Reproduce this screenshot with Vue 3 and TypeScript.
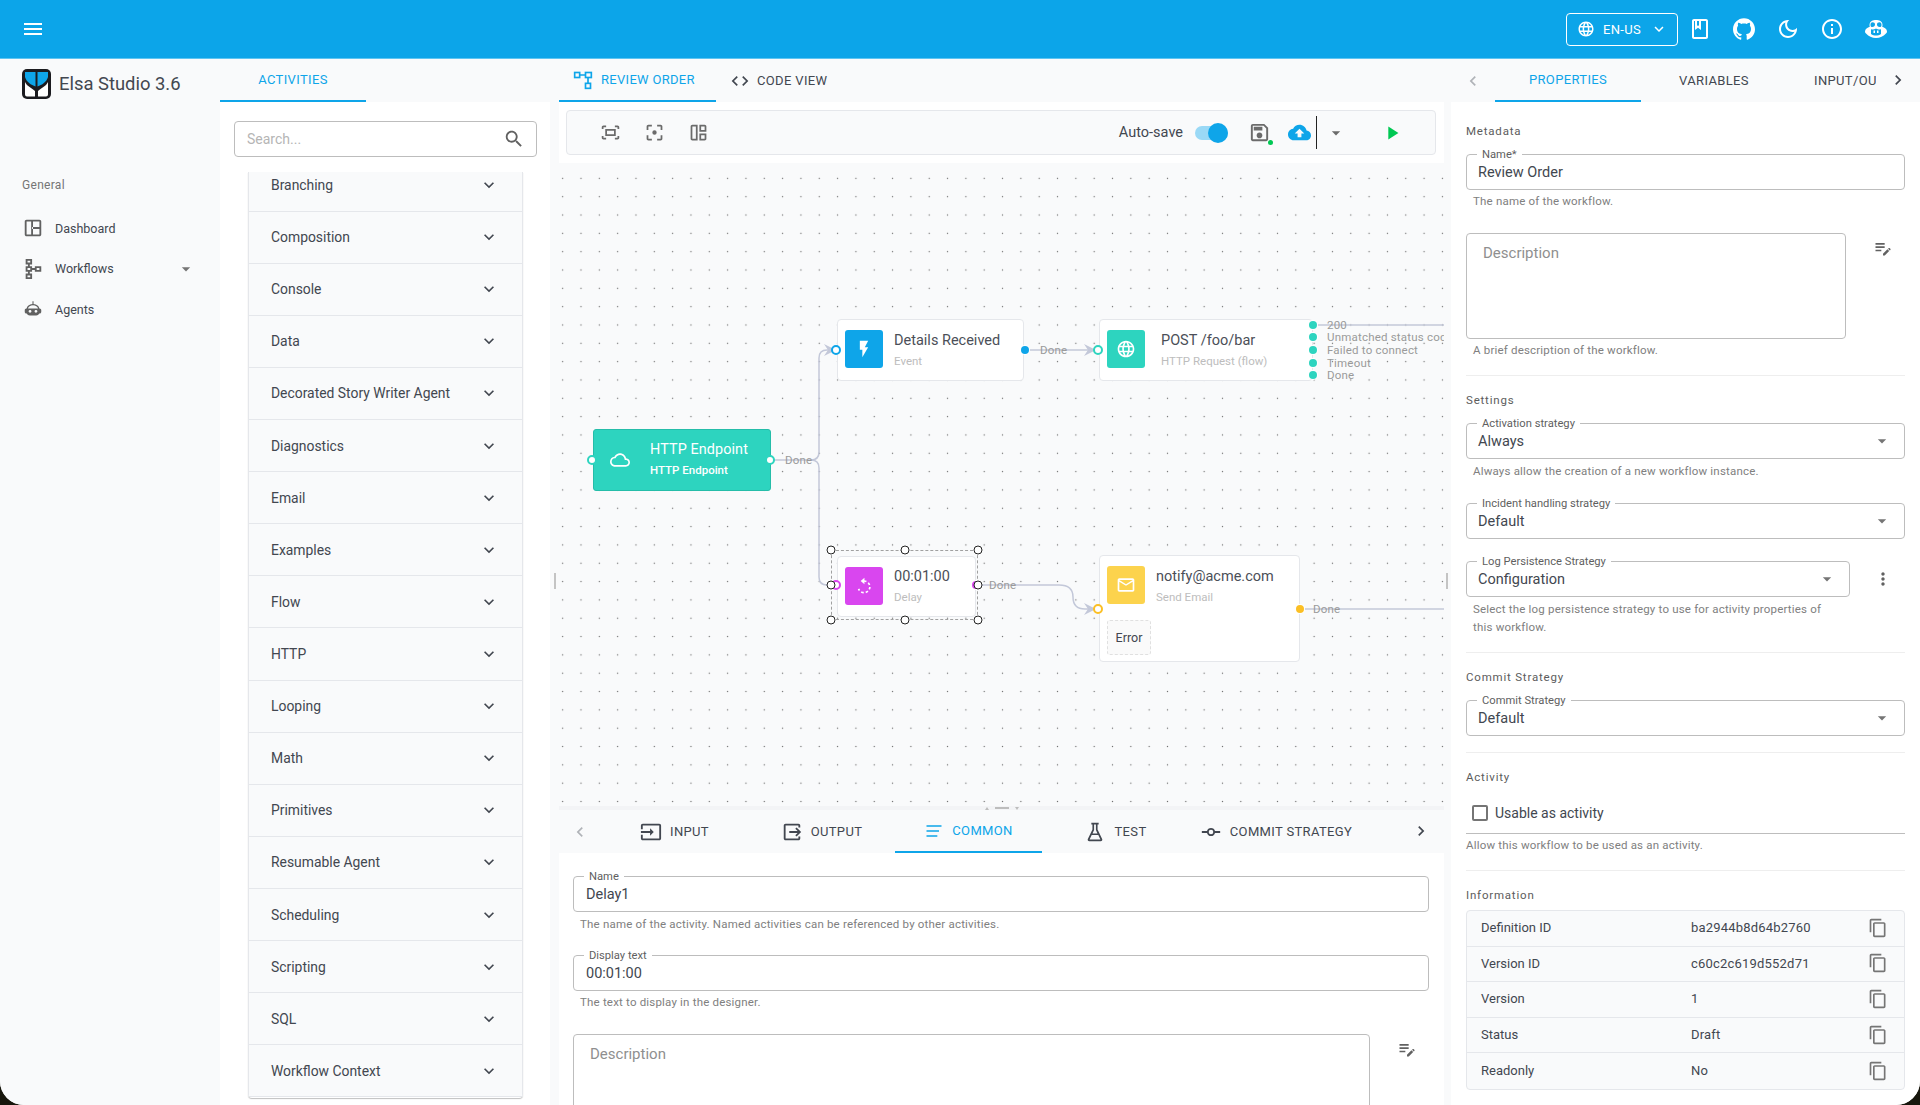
<script setup lang="ts">
// Material icon paths used across the page
const icons: Record<string, string> = {
  menu: 'M3 18h18v-2H3v2zm0-5h18v-2H3v2zm0-7v2h18V6H3z',
  globe: 'M11.99 2C6.47 2 2 6.48 2 12s4.47 10 9.99 10C17.52 22 22 17.52 22 12S17.52 2 11.99 2zm6.93 6h-2.95c-.32-1.25-.78-2.45-1.38-3.56 1.84.63 3.37 1.91 4.33 3.56zM12 4.04c.83 1.2 1.48 2.53 1.91 3.96h-3.82c.43-1.43 1.08-2.76 1.91-3.96zM4.26 14C4.1 13.36 4 12.69 4 12s.1-1.36.26-2h3.38c-.08.66-.14 1.32-.14 2 0 .68.06 1.34.14 2H4.26zm.82 2h2.95c.32 1.25.78 2.45 1.38 3.56-1.84-.63-3.37-1.9-4.33-3.56zm2.95-8H5.08c.96-1.66 2.49-2.93 4.33-3.56C8.81 5.55 8.35 6.75 8.03 8zM12 19.96c-.83-1.2-1.48-2.53-1.91-3.96h3.82c-.43 1.43-1.08 2.76-1.91 3.96zM14.34 14H9.66c-.09-.66-.16-1.32-.16-2 0-.68.07-1.35.16-2h4.68c.09.65.16 1.32.16 2 0 .68-.07 1.34-.16 2zm.25 5.56c.6-1.11 1.06-2.31 1.38-3.56h2.95c-.96 1.65-2.49 2.93-4.33 3.56zM16.36 14c.08-.66.14-1.32.14-2 0-.68-.06-1.34-.14-2h3.38c.16.64.26 1.31.26 2s-.1 1.36-.26 2h-3.38z',
  expand: 'M16.59 8.59L12 13.17 7.41 8.59 6 10l6 6 6-6z',
  book: 'M18 2H6c-1.1 0-2 .9-2 2v16c0 1.1.9 2 2 2h12c1.1 0 2-.9 2-2V4c0-1.1-.9-2-2-2zM9 4h2v5l-1-.75L9 9V4zm9 16H6V4h1v9l3-2.25L13 13V4h5v16z',
  github: 'M12 .297c-6.63 0-12 5.373-12 12 0 5.303 3.438 9.8 8.205 11.385.6.113.82-.258.82-.577 0-.285-.01-1.04-.015-2.04-3.338.724-4.042-1.61-4.042-1.61C4.422 18.07 3.633 17.7 3.633 17.7c-1.087-.744.084-.729.084-.729 1.205.084 1.838 1.236 1.838 1.236 1.07 1.835 2.809 1.305 3.495.998.108-.776.417-1.305.76-1.605-2.665-.3-5.466-1.332-5.466-5.93 0-1.31.465-2.38 1.235-3.22-.135-.303-.54-1.523.105-3.176 0 0 1.005-.322 3.3 1.23.96-.267 1.98-.399 3-.405 1.02.006 2.04.138 3 .405 2.28-1.552 3.285-1.23 3.285-1.23.645 1.653.24 2.873.12 3.176.765.84 1.23 1.91 1.23 3.22 0 4.61-2.805 5.625-5.475 5.92.42.36.81 1.096.81 2.22 0 1.606-.015 2.896-.015 3.286 0 .315.21.69.825.57C20.565 22.092 24 17.592 24 12.297c0-6.627-5.373-12-12-12',
  moon: 'M9.37 5.51c-.18.64-.27 1.31-.27 1.99 0 4.08 3.32 7.4 7.4 7.4.68 0 1.35-.09 1.99-.27C17.45 17.19 14.93 19 12 19c-3.86 0-7-3.14-7-7 0-2.93 1.81-5.45 4.37-6.49zM12 3c-4.97 0-9 4.03-9 9s4.03 9 9 9 9-4.03 9-9c0-.46-.04-.92-.1-1.36-.98 1.37-2.58 2.26-4.4 2.26-2.98 0-5.4-2.42-5.4-5.4 0-1.81.89-3.42 2.26-4.4-.44-.06-.9-.1-1.36-.1z',
  info: 'M11 7h2v2h-2zm0 4h2v6h-2zm1-9C6.48 2 2 6.48 2 12s4.48 10 10 10 10-4.48 10-10S17.52 2 12 2zm0 18c-4.41 0-8-3.59-8-8s3.59-8 8-8 8 3.59 8 8-3.59 8-8 8z',
  copilot: 'M12 3C9 3 5.5 4 5.5 8c0 .7.1 1.3.3 1.8C3.5 10.5 1 12.2 1 14.5c0 1 .5 1.8 1.3 2.3C4.5 19.5 8 21 12 21s7.5-1.5 9.7-4.2c.8-.5 1.3-1.3 1.3-2.3 0-2.3-2.5-4-4.8-4.7.2-.5.3-1.1.3-1.8C18.5 4 15 3 12 3zM8.5 5.2c1.5 0 2.5.8 2.5 2.4 0 1.5-1 2.5-2.7 2.5-1.3 0-1.8-1-1.8-2.4 0-1.5.6-2.5 2-2.5zm7 0c1.4 0 2 1 2 2.5 0 1.4-.5 2.4-1.8 2.4-1.7 0-2.7-1-2.7-2.5 0-1.6 1-2.4 2.5-2.4zM12 11.5c2.5 1.5 5 .8 5 .8V17c-1.5 1-3.2 1.5-5 1.5S8.5 18 7 17v-4.7s2.5.7 5-.8zM9.5 13.5V16H11v-2.5H9.5zm3.5 0V16h1.5v-2.5H13z',
  schema: 'M14 9v2h-3V9H8.5V7H11V1H4v6h2.5v2H4v6h2.5v2H4v6h7v-6H8.5v-2H11v-2h3v2h7V9h-7zM6 3h3v2H6V3zm3 18H6v-2h3v2zm0-8H6v-2h3v2zm10 0h-3v-2h3v2z',
  dashboard: 'M19 5v14H5V5h14m0-2H5c-1.1 0-2 .9-2 2v14c0 1.1.9 2 2 2h14c1.1 0 2-.9 2-2V5c0-1.1-.9-2-2-2zM10 5h2v14h-2zM11 11h8v2h-8z',
  robot: 'M11.4 3.5h1.2v3.1c3.6.2 5.9 2.2 6.4 4.9h.3c.9 0 1.7.8 1.7 1.7v2.1c0 .9-.8 1.7-1.7 1.7h-.5c-.6 1.3-1.9 2.1-3.3 2.1H8.5c-1.4 0-2.7-.8-3.3-2.1h-.5c-.9 0-1.7-.8-1.7-1.7v-2.1c0-.9.8-1.7 1.7-1.7H5c.5-2.7 2.8-4.7 6.4-4.9V3.5zM6.5 11.5h11c-.4-2.1-2.6-3.7-5.5-3.7s-5.1 1.6-5.5 3.7zM8.8 13c-.9 0-1.6.7-1.6 1.5s.7 1.5 1.6 1.5 1.5-.7 1.5-1.5S9.7 13 8.8 13zm6.4 0c-.9 0-1.5.7-1.5 1.5s.6 1.5 1.5 1.5 1.6-.7 1.6-1.5-.7-1.5-1.6-1.5z',
  search: 'M15.5 14h-.79l-.28-.27C15.41 12.59 16 11.11 16 9.5 16 5.91 13.09 3 9.5 3S3 5.91 3 9.5 5.91 16 9.5 16c1.61 0 3.09-.59 4.23-1.57l.27.28v.79l5 4.99L20.49 19l-4.99-5zm-6 0C7.01 14 5 11.99 5 9.5S7.01 5 9.5 5 14 7.01 14 9.5 11.99 14 9.5 14z',
  caret: 'M7 10l5 5 5-5z',
  left: 'M15.41 7.41L14 6l-6 6 6 6 1.41-1.41L10.83 12z',
  right: 'M10 6L8.59 7.41 13.17 12l-4.58 4.59L10 18l6-6z',
  code: 'M9.4 16.6L4.8 12l4.6-4.6L8 6l-6 6 6 6 1.4-1.4zm5.2 0l4.6-4.6-4.6-4.6L16 6l6 6-6 6-1.4-1.4z',
  fit: 'M17 4h3c1.1 0 2 .9 2 2v2h-2V6h-3V4zM4 8V6h3V4H4c-1.1 0-2 .9-2 2v2h2zm16 8v2h-3v2h3c1.1 0 2-.9 2-2v-2h-2zM7 18H4v-2H2v2c0 1.1.9 2 2 2h3v-2zM18 8H6v8h12V8zm-2 6H8v-4h8v4z',
  focus: 'M12 9.5a2.5 2.5 0 100 5 2.5 2.5 0 000-5zM5 15H3v4c0 1.1.9 2 2 2h4v-2H5v-4zM5 5h4V3H5c-1.1 0-2 .9-2 2v4h2V5zm14-2h-4v2h4v4h2V5c0-1.1-.9-2-2-2zm0 16h-4v2h4c1.1 0 2-.9 2-2v-4h-2v4z',
  mosaic: 'M3 5v14c0 1.1.9 2 2 2h6V3H5c-1.1 0-2 .9-2 2zm6 14H5V5h4v14zM19 3h-6v8h8V5c0-1.1-.9-2-2-2zm0 6h-4V5h4v4zM13 21h6c1.1 0 2-.9 2-2v-6h-8v8zm2-6h4v4h-4v-4z',
  save: 'M17 3H5c-1.11 0-2 .9-2 2v14c0 1.1.89 2 2 2h14c1.1 0 2-.9 2-2V7l-4-4zm2 16H5V5h11.17L19 7.83V19zm-7-7c-1.66 0-3 1.34-3 3s1.34 3 3 3 3-1.34 3-3-1.34-3-3-3zM6 6h9v4H6z',
  upload: 'M19.35 10.04C18.67 6.59 15.64 4 12 4 9.11 4 6.6 5.64 5.35 8.04 2.34 8.36 0 10.91 0 14c0 3.31 2.69 6 6 6h13c2.76 0 5-2.24 5-5 0-2.64-2.05-4.78-4.65-4.96zM14 13v4h-4v-4H7l5-5 5 5h-3z',
  play: 'M8 5v14l11-7z',
  input: 'M21 3.01H3c-1.1 0-2 .9-2 2V9h2V4.99h18v14.03H3V15H1v4.01c0 1.1.9 1.98 2 1.98h18c1.1 0 2-.88 2-1.98v-14c0-1.11-.9-2-2-2zM11 16l4-4-4-4v3H1v2h10v3z',
  output: 'M17 17l5-5-5-5-1.41 1.41L18.17 11H9v2h9.17l-2.58 2.59zM19 19H5V5h14v2h2V5c0-1.1-.9-2-2-2H5c-1.1 0-2 .9-2 2v14c0 1.1.9 2 2 2h14c1.1 0 2-.9 2-2v-2h-2v2z',
  common: 'M3 5h18v2H3zM3 11h15v2H3zM3 17h13v2H3z',
  flask: 'M8 2h8v1.8h-1.2v5.4l5 10.3c.6 1.3-.2 2.5-1.6 2.5H5.8c-1.4 0-2.2-1.2-1.6-2.5l5-10.3V3.8H8V2zm3 1.8v5.9L9.3 13.5h5.4L13 9.7V3.8h-2zm-2.6 11.5l-2.3 4.9h11.8l-2.3-4.9H8.4z',
  commit: 'M12 7.5a4.5 4.5 0 014.36 3.4H22v2.2h-5.64a4.5 4.5 0 01-8.72 0H2v-2.2h5.64A4.5 4.5 0 0112 7.5zm0 2a2.5 2.5 0 100 5 2.5 2.5 0 000-5z',
  editNote: 'M3 10h11v2H3v-2zm0-2h11V6H3v2zm0 8h7v-2H3v2zm15.01-3.13l.71-.71c.39-.39 1.02-.39 1.41 0l.71.71c.39.39.39 1.02 0 1.41l-.71.71-2.12-2.12zm-.71.71l-5.3 5.3V21h2.12l5.3-5.3-2.12-2.12z',
  kebab: 'M12 8c1.1 0 2-.9 2-2s-.9-2-2-2-2 .9-2 2 .9 2 2 2zm0 2c-1.1 0-2 .9-2 2s.9 2 2 2 2-.9 2-2-.9-2-2-2zm0 6c-1.1 0-2 .9-2 2s.9 2 2 2 2-.9 2-2-.9-2-2-2z',
  copy: 'M16 1H4c-1.1 0-2 .9-2 2v14h2V3h12V1zm3 4H8c-1.1 0-2 .9-2 2v14c0 1.1.9 2 2 2h11c1.1 0 2-.9 2-2V7c0-1.1-.9-2-2-2zm0 16H8V7h11v14z',
  cloud: 'M19.35 10.04C18.67 6.59 15.64 4 12 4 9.11 4 6.6 5.64 5.35 8.04 2.34 8.36 0 10.91 0 14c0 3.31 2.69 6 6 6h13c2.76 0 5-2.24 5-5 0-2.64-2.05-4.78-4.65-4.96zM19 18H6c-2.21 0-4-1.79-4-4 0-2.05 1.53-3.76 3.56-3.97l1.07-.11.5-.95C8.08 7.14 9.94 6 12 6c2.62 0 4.88 1.86 5.39 4.43l.3 1.5 1.53.11c1.56.1 2.78 1.41 2.78 2.96 0 1.65-1.35 3-3 3z',
  bolt: 'M7 2v11h3v9l7-12h-4l4-8z',
  mail: 'M20 4H4c-1.1 0-1.99.9-1.99 2L2 18c0 1.1.9 2 2 2h16c1.1 0 2-.9 2-2V6c0-1.1-.9-2-2-2zm0 14H4V8l8 5 8-5v10zm-8-7L4 6h16l-8 5z'
}

const topIcons = ['book', 'github', 'moon', 'info', 'copilot']

const navItems = [
  { label: 'Dashboard', icon: 'dashboard' },
  { label: 'Workflows', icon: 'schema', caret: true },
  { label: 'Agents', icon: 'robot' }
]

const categories = [
  'Branching', 'Composition', 'Console', 'Data', 'Decorated Story Writer Agent', 'Diagnostics',
  'Email', 'Examples', 'Flow', 'HTTP', 'Looping', 'Math', 'Primitives', 'Resumable Agent',
  'Scheduling', 'Scripting', 'SQL', 'Workflow Context'
]

interface FlowNode {
  title: string
  sub: string
  icon: string
  color: string
  x: number
  y: number
  w: number
  h: number
  gap: number
  textTop: number
}

const nodes: FlowNode[] = [
  { title: 'Details Received', sub: 'Event', icon: 'bolt', color: '#0ea5e9', x: 278, y: 156, w: 187, h: 62, gap: 11, textTop: 1 },
  { title: 'POST /foo/bar', sub: 'HTTP Request (flow)', icon: 'globe', color: '#2dd4bf', x: 540, y: 156, w: 214, h: 62, gap: 16, textTop: 1 },
  { title: '00:01:00', sub: 'Delay', icon: '', color: '#d946ef', x: 278, y: 393, w: 139, h: 61, gap: 11, textTop: 0 },
  { title: 'notify@acme.com', sub: 'Send Email', icon: 'mail', color: '#fcd34d', x: 540, y: 392, w: 201, h: 107, gap: 11, textTop: 1 }
]

const ports = [
  { x: 33, y: 297, color: '#2dd4bf', open: true, size: 10 },
  { x: 211, y: 297, color: '#2dd4bf', open: true, size: 10 },
  { x: 277, y: 187, color: '#0ea5e9', open: true, size: 10 },
  { x: 466, y: 187, color: '#0ea5e9', open: false, size: 8 },
  { x: 539, y: 187, color: '#2dd4bf', open: true, size: 10 },
  { x: 754, y: 162, color: '#2dd4bf', open: false, size: 8 },
  { x: 754, y: 174, color: '#2dd4bf', open: false, size: 8 },
  { x: 754, y: 187, color: '#2dd4bf', open: false, size: 8 },
  { x: 754, y: 200, color: '#2dd4bf', open: false, size: 8 },
  { x: 754, y: 212, color: '#2dd4bf', open: false, size: 8 },
  { x: 277, y: 422, color: '#d946ef', open: true, size: 10 },
  { x: 417, y: 422, color: '#d946ef', open: false, size: 8 },
  { x: 539, y: 446, color: '#fbbf24', open: true, size: 10 },
  { x: 741, y: 446, color: '#fbbf24', open: false, size: 8 }
]

const edges = [
  'M211 297H252Q260 297 260 289V195Q260 187 268 187H277',
  'M252 297Q260 297 260 305V414Q260 422 268 422H272',
  'M466 187H535',
  'M754 162H890',
  'M419 422H500Q514 422 514 434Q514 446 526 446H535',
  'M741 446H890'
]

const arrows = [
  '277,187 265,181 269,187 265,193',
  '537,187 525,181 529,187 525,193',
  '537,446 525,440 529,446 525,452'
]

const edgeLabels = [
  { text: 'Done', x: 226, y: 297 },
  { text: 'Done', x: 481, y: 187 },
  { text: 'Done', x: 430, y: 422 },
  { text: 'Done', x: 754, y: 446 },
  { text: '200', x: 768, y: 162 },
  { text: 'Unmatched status code', x: 768, y: 174 },
  { text: 'Failed to connect', x: 768, y: 187 },
  { text: 'Timeout', x: 768, y: 200 },
  { text: 'Done', x: 768, y: 212 }
]

const handles = [
  [272, 387], [346, 387], [419, 387],
  [272, 422], [419, 422],
  [272, 457], [346, 457], [419, 457]
]

const activityTabs = [
  { label: 'Input', icon: 'input', width: 147 },
  { label: 'Output', icon: 'output', width: 147 },
  { label: 'Common', icon: 'common', width: 147, active: true },
  { label: 'Test', icon: 'flask', width: 147 },
  { label: 'Commit Strategy', icon: 'commit', width: 174 }
]

const infoRows = [
  { label: 'Definition ID', value: 'ba2944b8d64b2760' },
  { label: 'Version ID', value: 'c60c2c619d552d71' },
  { label: 'Version', value: '1' },
  { label: 'Status', value: 'Draft' },
  { label: 'Readonly', value: 'No' }
]
</script>

<template>
  <div class="app">
    <header class="topbar">
      <svg class="icon menu-icon" viewBox="0 0 24 24"><path :d="icons.menu" /></svg>
      <div class="lang">
        <svg class="icon lang-globe" viewBox="0 0 24 24"><path :d="icons.globe" /></svg>
        <span>EN-US</span>
        <svg class="icon lang-caret" viewBox="0 0 24 24"><path :d="icons.expand" /></svg>
      </div>
      <span v-for="name in topIcons" :key="name" class="top-slot">
        <svg class="icon" :class="{ 'top-github': name === 'github' }" viewBox="0 0 24 24"><path :d="icons[name]" fill-rule="evenodd" /></svg>
      </span>
    </header>

    <div class="shell">
      <nav class="sidenav">
        <div class="brand">
          <svg class="logo" viewBox="0 0 29 30">
            <rect width="29" height="30" rx="5" fill="#1b1b1f" />
            <path d="M3 3H13.5V17.5C9 16 4.5 13 3 8Z" fill="#0ea5e9" />
            <path d="M26 3H15.5V17.5C20 16 24.5 13 26 8Z" fill="#0ea5e9" />
            <path d="M3 13C5 17.5 10 19 13 22V27.5H5Q3 27.5 3 25.5Z" fill="#fff" />
            <path d="M26 13C24 17.5 19 19 16 22V27.5H24Q26 27.5 26 25.5Z" fill="#fff" />
          </svg>
          <span>Elsa Studio 3.6</span>
        </div>
        <div class="nav-group">General</div>
        <a v-for="item in navItems" :key="item.label" class="nav-item">
          <svg class="icon nav-icon" viewBox="0 0 24 24"><path :d="icons[item.icon]" fill-rule="evenodd" /></svg>
          <span class="nav-label">{{ item.label }}</span>
          <svg v-if="item.caret" class="icon nav-caret" viewBox="0 0 24 24"><path :d="icons.caret" /></svg>
        </a>
      </nav>

      <aside class="activities">
        <div class="tabs-header">
          <div class="tab active activities-tab">Activities</div>
        </div>
        <div class="activities-body">
          <div class="search">
            <span>Search...</span>
            <svg class="icon" viewBox="0 0 24 24"><path :d="icons.search" /></svg>
          </div>
          <div class="accordion">
            <div class="accordion-inner">
              <div v-for="name in categories" :key="name" class="accordion-row">
                <span>{{ name }}</span>
                <svg class="icon" viewBox="0 0 24 24"><path :d="icons.expand" /></svg>
              </div>
            </div>
          </div>
        </div>
      </aside>

      <main class="center">
        <div class="tabs-header">
          <div class="tab active doc-tab">
            <svg class="icon stroke-icon doc-icon" viewBox="0 0 24 24" stroke="#0ea5e9" stroke-width="2">
              <rect x="2" y="3" width="6" height="6" />
              <rect x="15" y="3" width="7" height="6" />
              <rect x="15" y="16" width="6" height="6" />
              <path d="M8 6H15M18 9V16" />
            </svg>
            <span>Review Order</span>
          </div>
          <div class="tab code-tab">
            <svg class="icon" viewBox="0 0 24 24"><path :d="icons.code" /></svg>
            <span>Code View</span>
          </div>
        </div>

        <div class="toolbar-wrap">
          <div class="toolbar">
            <svg class="icon tool" viewBox="0 0 24 24"><path :d="icons.fit" /></svg>
            <svg class="icon tool" viewBox="0 0 24 24"><path :d="icons.focus" /></svg>
            <svg class="icon tool" viewBox="0 0 24 24"><path :d="icons.mosaic" /></svg>
            <span class="auto-save">Auto-save</span>
            <span class="switch"><i class="switch-thumb"></i></span>
            <span class="save-wrap">
              <svg class="icon" viewBox="0 0 24 24"><path :d="icons.save" /></svg>
              <i class="save-dot"></i>
            </span>
            <svg class="icon upload" viewBox="0 0 24 24"><path :d="icons.upload" /></svg>
            <span class="tool-divider"></span>
            <svg class="icon tool-caret" viewBox="0 0 24 24"><path :d="icons.caret" /></svg>
            <svg class="icon play" viewBox="0 0 24 24"><path :d="icons.play" /></svg>
          </div>
        </div>

        <div class="canvas">
          <svg class="edges" width="885" height="643">
            <path v-for="d in edges" :key="d" :d="d" fill="none" stroke="#c3c8d9" stroke-width="1.5" />
            <polygon v-for="p in arrows" :key="p" :points="p" fill="#c3c8d9" />
          </svg>

          <div class="http-node">
            <svg class="icon http-cloud" viewBox="0 0 24 24"><path :d="icons.cloud" /></svg>
            <div>
              <div class="http-title">HTTP Endpoint</div>
              <div class="http-sub">HTTP Endpoint</div>
            </div>
          </div>

          <div
            v-for="node in nodes"
            :key="node.title"
            class="node"
            :style="{ left: node.x + 'px', top: node.y + 'px', width: node.w + 'px', height: node.h + 'px' }"
          >
            <div class="node-main">
              <div class="node-icon" :style="{ background: node.color }">
                <svg v-if="node.icon" class="icon" viewBox="0 0 24 24"><path :d="icons[node.icon]" /></svg>
                <svg v-else class="icon stroke-icon" viewBox="0 0 24 24" stroke="#fff" stroke-width="2">
                  <path d="M12 6A7 7 0 1 1 5.500 15.500" stroke-dasharray="3 2.500" />
                  <path d="M12.500 2V10L8 6Z" fill="#fff" stroke="none" />
                </svg>
              </div>
              <div class="node-text" :style="{ marginLeft: node.gap + 'px', marginTop: node.textTop + 'px' }">
                <div class="node-title">{{ node.title }}</div>
                <div class="node-sub">{{ node.sub }}</div>
              </div>
            </div>
            <div v-if="node.sub === 'Send Email'" class="node-error">Error</div>
          </div>

          <span
            v-for="label in edgeLabels"
            :key="label.text + label.y"
            class="edge-label"
            :style="{ left: label.x + 'px', top: label.y + 'px' }"
          >{{ label.text }}</span>

          <div class="selection"></div>

          <i
            v-for="(p, i) in ports"
            :key="i"
            class="port"
            :class="{ open: p.open }"
            :style="{ left: p.x + 'px', top: p.y + 'px', width: p.size + 'px', height: p.size + 'px', color: p.color }"
          ></i>

          <i
            v-for="(h, i) in handles"
            :key="'h' + i"
            class="handle"
            :style="{ left: h[0] + 'px', top: h[1] + 'px' }"
          ></i>
        </div>

        <i class="grip grip-left"></i>
        <i class="grip grip-right"></i>

        <div class="splitter">
          <i class="tri-up"></i>
          <i class="bar"></i>
          <i class="tri-down"></i>
        </div>

        <div class="tabs-header activity-tabs">
          <svg class="icon tab-chevron dim" viewBox="0 0 24 24"><path :d="icons.left" /></svg>
          <div
            v-for="tab in activityTabs"
            :key="tab.label"
            class="tab activity-tab"
            :class="{ active: tab.active }"
            :style="{ width: tab.width + 'px' }"
          >
            <svg class="icon" viewBox="0 0 24 24"><path :d="icons[tab.icon]" fill-rule="evenodd" /></svg>
            <span>{{ tab.label }}</span>
          </div>
          <svg class="icon tab-chevron chevron-end" viewBox="0 0 24 24"><path :d="icons.right" /></svg>
        </div>

        <div class="activity-body">
          <div class="field wide-field">
            <label>Name</label>
            <span>Delay1</span>
          </div>
          <p class="helper helper-inset">The name of the activity. Named activities can be referenced by other activities.</p>
          <div class="field field-next wide-field">
            <label>Display text</label>
            <span>00:01:00</span>
          </div>
          <p class="helper helper-inset m3">The text to display in the designer.</p>
          <div class="area-row area-row-bottom">
            <div class="area">Description</div>
            <svg class="icon area-icon" viewBox="0 0 24 24"><path :d="icons.editNote" /></svg>
          </div>
        </div>
      </main>

      <aside class="properties">
        <div class="tabs-header prop-tabs">
          <svg class="icon tab-chevron dim" viewBox="0 0 24 24"><path :d="icons.left" /></svg>
          <div class="tab active prop-tab">Properties</div>
          <div class="tab prop-tab">Variables</div>
          <div class="prop-clip"><div class="tab clip-tab">Input/Output</div></div>
          <svg class="icon tab-chevron prop-next" viewBox="0 0 24 24"><path :d="icons.right" /></svg>
        </div>

        <div class="prop-body">
          <h4 class="section-title">Metadata</h4>
          <div class="field m15">
            <label>Name*</label>
            <span>Review Order</span>
          </div>
          <p class="helper helper-inset m3">The name of the workflow.</p>
          <div class="area-row m24">
            <div class="area">Description</div>
            <svg class="icon area-icon" viewBox="0 0 24 24"><path :d="icons.editNote" /></svg>
          </div>
          <p class="helper helper-inset m3">A brief description of the workflow.</p>
          <hr class="divider m17" />

          <h4 class="section-title m16">Settings</h4>
          <div class="field m15">
            <label>Activation strategy</label>
            <span>Always</span>
            <svg class="icon select-caret" viewBox="0 0 24 24"><path :d="icons.caret" /></svg>
          </div>
          <p class="helper helper-inset m4">Always allow the creation of a new workflow instance.</p>
          <div class="field m24">
            <label>Incident handling strategy</label>
            <span>Default</span>
            <svg class="icon select-caret" viewBox="0 0 24 24"><path :d="icons.caret" /></svg>
          </div>
          <div class="log-row m22">
            <div class="field">
              <label>Log Persistence Strategy</label>
              <span>Configuration</span>
              <svg class="icon select-caret" viewBox="0 0 24 24"><path :d="icons.caret" /></svg>
            </div>
            <svg class="icon kebab" viewBox="0 0 24 24"><path :d="icons.kebab" /></svg>
          </div>
          <p class="helper helper-inset helper-wrap m3">Select the log persistence strategy to use for activity properties of this workflow.</p>
          <hr class="divider m16" />

          <h4 class="section-title m16">Commit Strategy</h4>
          <div class="field m15">
            <label>Commit Strategy</label>
            <span>Default</span>
            <svg class="icon select-caret" viewBox="0 0 24 24"><path :d="icons.caret" /></svg>
          </div>
          <hr class="divider m16" />

          <h4 class="section-title m16">Activity</h4>
          <div class="check-row">
            <i class="checkbox"></i>
            <span>Usable as activity</span>
          </div>
          <p class="helper m3">Allow this workflow to be used as an activity.</p>
          <hr class="divider m17" />

          <h4 class="section-title m16">Information</h4>
          <div class="info-table">
            <div v-for="row in infoRows" :key="row.label" class="info-row">
              <span class="info-label">{{ row.label }}</span>
              <span class="info-value">{{ row.value }}</span>
              <svg class="icon info-copy" viewBox="0 0 24 24"><path :d="icons.copy" /></svg>
            </div>
          </div>
        </div>
      </aside>
    </div>
  </div>
</template>

<style>
html,
body {
  background: #17160c;
}
</style>

<style scoped>
.app {
  width: 1920px;
  height: 1105px;
  display: flex;
  flex-direction: column;
  overflow: hidden;
  border-radius: 0 0 24px 24px;
  background: #f9fafb;
  font-family: Roboto, "Liberation Sans", sans-serif;
  color: #424750;
}

.icon {
  display: block;
  width: 24px;
  height: 24px;
  fill: currentColor;
  flex: none;
}

.stroke-icon {
  fill: none;
}

/* top bar */
.topbar {
  height: 59px;
  flex: none;
  display: flex;
  align-items: center;
  padding: 0 22px 0 21px;
  background: #0ca5e9;
  border-bottom: 1px solid #5ec5f2;
  box-sizing: border-box;
  color: #fff;
}

.menu-icon {
  margin-right: auto;
}

.lang {
  width: 112px;
  height: 33px;
  box-sizing: border-box;
  display: flex;
  align-items: center;
  border: 1px solid #fff;
  border-radius: 4px;
  font-size: 13px;
  letter-spacing: 0.3px;
}

.lang-globe {
  width: 18px;
  height: 18px;
  margin: 0 8px 0 10px;
}

.lang-caret {
  width: 18px;
  height: 18px;
  margin-left: 9px;
}

.top-slot {
  width: 44px;
  display: flex;
  justify-content: center;
}

.top-github {
  width: 22px;
  height: 22px;
}

.shell {
  flex: 1;
  min-height: 0;
  display: grid;
  grid-template-columns: 220px 330px 1fr 469px;
}

/* side navigation */
.sidenav {
  background: #f9fafb;
}

.brand {
  display: flex;
  align-items: center;
  gap: 8px;
  margin: 10px 0 0 22px;
  height: 30px;
  font-size: 18.4px;
  line-height: 28px;
}

.logo {
  width: 29px;
  height: 30px;
}

.nav-group {
  margin: 78px 0 15px 22px;
  line-height: 16px;
  font-size: 12px;
  letter-spacing: 0.3px;
  color: #757575;
}

.nav-item {
  height: 40.5px;
  display: flex;
  align-items: center;
  font-size: 12.5px;
  padding-left: 22px;
}

.nav-icon {
  width: 22px;
  height: 22px;
  margin-right: 11px;
  color: #616161;
}

.nav-label {
  width: 121px;
}

.nav-caret {
  width: 20px;
  height: 20px;
  color: #757575;
}

/* tabs shared */
.tabs-header {
  height: 43px;
  flex: none;
  display: flex;
  align-items: stretch;
  background: #f9fafb;
}

.tab {
  box-sizing: border-box;
  display: flex;
  align-items: center;
  justify-content: center;
  font-size: 13px;
  letter-spacing: 0.35px;
  text-transform: uppercase;
}

.tab.active {
  color: #0ea5e9;
  border-bottom: 2px solid #0ea5e9;
}

.activities-tab {
  width: 146px;
}

/* activities */
.activities {
  display: flex;
  flex-direction: column;
  min-height: 0;
}

.activities-body {
  flex: 1;
  min-height: 0;
  background: #fff;
  padding: 19px 13px 7px 14px;
  display: flex;
  flex-direction: column;
}

.search {
  height: 36px;
  flex: none;
  box-sizing: border-box;
  display: flex;
  align-items: center;
  justify-content: space-between;
  padding: 0 11px 0 12px;
  border: 1px solid #bdbdbd;
  border-radius: 4px;
  font-size: 14px;
  color: #b5b5b5;
}

.search .icon {
  color: #616161;
  width: 22px;
  height: 22px;
}

.accordion {
  margin: 15px 14px 0 14px;
  flex: 1;
  min-height: 0;
  overflow: hidden;
  border-radius: 0 0 4px 4px;
  box-shadow: 0 1px 1px rgba(0, 0, 0, 0.25);
}

.accordion-inner {
  margin-top: -12.5px;
}

.accordion-row {
  height: 52.12px;
  box-sizing: border-box;
  display: flex;
  align-items: center;
  justify-content: space-between;
  padding: 0 23px 0 22px;
  font-size: 13.9px;
  background: #f9fafb;
  border: solid #e5e7eb;
  border-width: 0 1px 1px 1px;
}

.accordion-row .icon {
  width: 20px;
  height: 20px;
}

/* center column */
.center {
  position: relative;
  display: flex;
  flex-direction: column;
  min-height: 0;
  padding: 0 7px 0 9px;
  box-sizing: border-box;
}

.doc-tab {
  width: 157px;
  justify-content: flex-start;
  padding-left: 14px;
  gap: 8px;
  letter-spacing: 0.3px;
}

.doc-icon {
  width: 20px;
  height: 20px;
}

.code-tab {
  margin-left: 14px;
  gap: 7px;
}

.code-tab .icon {
  width: 20px;
  height: 20px;
}

.toolbar-wrap {
  flex: none;
  background: #fff;
  padding: 8px 8px 8px 7px;
}

.toolbar {
  height: 45px;
  box-sizing: border-box;
  display: flex;
  align-items: center;
  padding-left: 33px;
  background: #f9fafb;
  border: 1px solid #e5e7eb;
  border-radius: 4px;
  color: #6b6b6b;
}

.tool {
  width: 21px;
  height: 21px;
  margin-right: 23px;
}

.auto-save {
  margin-left: auto;
  margin-right: 12px;
  font-size: 14.5px;
  color: #424750;
}

.switch {
  position: relative;
  width: 33px;
  height: 14px;
  border-radius: 7px;
  background: #9ad9f6;
  margin-right: 20px;
}

.switch-thumb {
  position: absolute;
  right: 0;
  top: -3px;
  width: 20px;
  height: 20px;
  border-radius: 50%;
  background: #0ea5e9;
}

.save-wrap {
  position: relative;
  width: 23px;
  height: 23px;
  margin-right: 17px;
}

.save-wrap .icon {
  width: 23px;
  height: 23px;
}

.save-dot {
  position: absolute;
  right: -2px;
  bottom: -1px;
  width: 5px;
  height: 5px;
  border-radius: 50%;
  background: #00c853;
}

.upload {
  color: #0ea5e9;
  width: 23px;
  height: 23px;
  margin-right: 5px;
}

.tool-divider {
  width: 1px;
  height: 33px;
  background: #222;
}

.tool-caret {
  width: 20px;
  height: 20px;
  margin-left: 9px;
}

.play {
  color: #00c853;
  width: 22px;
  height: 22px;
  margin: 0 32px 0 35px;
}

/* canvas */
.canvas {
  position: relative;
  flex: 1;
  min-height: 0;
  overflow: hidden;
  background-color: #f9fafb;
  background-image: radial-gradient(circle, #6e6e6e 0.7px, transparent 1px);
  background-size: 18.33px 18.33px;
  background-position: -5.5px 6.2px;
}

.edges {
  position: absolute;
  inset: 0;
}

.http-node {
  position: absolute;
  left: 34px;
  top: 266px;
  width: 178px;
  height: 62px;
  box-sizing: border-box;
  display: flex;
  align-items: center;
  background: #2dd4bf;
  border: 1px solid #25bda9;
  border-radius: 3px;
  color: #fff;
}

.http-cloud {
  width: 20px;
  height: 20px;
  margin: 0 20px 0 16px;
}

.http-title {
  font-size: 14.4px;
  letter-spacing: 0.1px;
  line-height: 20px;
  margin-top: -2px;
}

.http-sub {
  font-size: 11.5px;
  font-weight: 500;
  line-height: 16px;
  margin-top: 2px;
}

.node {
  position: absolute;
  box-sizing: border-box;
  background: #fff;
  border: 1px solid #e5e7eb;
  border-radius: 4px;
  padding: 10px 7px;
}

.node-main {
  display: flex;
}

.node-icon {
  width: 38px;
  height: 38px;
  flex: none;
  display: flex;
  align-items: center;
  justify-content: center;
  border-radius: 3px;
  color: #fff;
}

.node-icon .icon {
  width: 20px;
  height: 20px;
}

.node-title {
  font-size: 14.5px;
  line-height: 20px;
  color: #4b4f58;
}

.node-sub {
  font-size: 11.5px;
  line-height: 16px;
  margin-top: 2px;
  color: #bdbdbd;
}

.node-error {
  width: 44px;
  height: 35px;
  margin-top: 15px;
  box-sizing: border-box;
  display: flex;
  align-items: center;
  justify-content: center;
  font-size: 12.5px;
  border: 1px dashed #e0e0e0;
  border-radius: 3px;
  background: #fafafa;
}

.edge-label {
  position: absolute;
  transform: translateY(-50%);
  font-size: 11.5px;
  letter-spacing: 0.2px;
  line-height: 12px;
  white-space: nowrap;
  color: #9a9a9a;
}

.selection {
  position: absolute;
  left: 272px;
  top: 387px;
  width: 147px;
  height: 70px;
  box-sizing: border-box;
  border: 1.5px dashed #a0a0a0;
}

.port {
  position: absolute;
  box-sizing: border-box;
  transform: translate(-50%, -50%);
  border-radius: 50%;
  background: currentColor;
  box-shadow: 0 0 0 1px #fff;
}

.port.open {
  background: #fff;
  border: 2px solid currentColor;
  box-shadow: none;
}

.handle {
  position: absolute;
  width: 9px;
  height: 9px;
  box-sizing: border-box;
  transform: translate(-50%, -50%);
  border-radius: 50%;
  border: 1px solid #222;
  background: #fff;
}

.grip {
  position: absolute;
  top: 514px;
  width: 2px;
  height: 16px;
  background: #c4c4c4;
}

.grip-left {
  left: 4px;
}

.grip-right {
  right: 3px;
}

/* resize grip between canvas and activity panel */
.splitter {
  height: 4px;
  flex: none;
  display: flex;
  align-items: center;
  justify-content: center;
  gap: 6px;
  background: #f3f4f6;
}

.bar {
  width: 14px;
  height: 2px;
  background: #bdbdbd;
}

.tri-up,
.tri-down {
  width: 0;
  height: 0;
  border-left: 2px solid transparent;
  border-right: 2px solid transparent;
}

.tri-up {
  border-bottom: 3px solid #bdbdbd;
}

.tri-down {
  border-top: 3px solid #bdbdbd;
}

.activity-tabs {
  position: relative;
}

.tab-chevron {
  align-self: center;
  width: 20px;
  height: 20px;
}

.dim {
  color: #b0b3b8;
}

.activity-tabs .dim {
  margin: 0 11px 0 11px;
}

.activity-tab {
  gap: 8px;
  flex: none;
}

.activity-tab .icon {
  width: 22px;
  height: 22px;
}

.activity-tab.active .icon {
  width: 20px;
  height: 20px;
}

.chevron-end {
  position: absolute;
  right: 13px;
  top: 11px;
}

.activity-body {
  flex: none;
  height: 252px;
  box-sizing: border-box;
  overflow: hidden;
  background: #fff;
  padding: 23px 15px 0 14px;
}

/* form fields */
.field {
  position: relative;
  height: 36px;
  box-sizing: border-box;
  display: flex;
  align-items: center;
  padding: 0 11px;
  border: 1px solid #bdbdbd;
  border-radius: 4px;
  font-size: 14.5px;
}

.wide-field {
  padding: 0 12px;
}

.field label {
  position: absolute;
  left: 10px;
  top: -7px;
  padding: 0 5px;
  background: #fff;
  font-size: 11.2px;
  line-height: 14px;
  color: #5f5f5f;
}

.select-caret {
  margin-left: auto;
  margin-right: 1px;
  width: 20px;
  height: 20px;
  color: #757575;
}

.field-next {
  margin-top: 23px;
}

.helper {
  margin: 4px 0 0;
  font-size: 11.5px;
  line-height: 16px;
  letter-spacing: 0.19px;
  color: #808080;
}

.helper-inset {
  padding-left: 7px;
}

.helper-wrap {
  width: 360px;
  line-height: 18px;
}

.area-row {
  display: flex;
  align-items: flex-start;
}

.area-row-bottom {
  margin-top: 24px;
}

.area {
  flex: 1;
  height: 106px;
  box-sizing: border-box;
  padding: 10px 16px;
  border: 1px solid #bdbdbd;
  border-radius: 4px;
  font-size: 15px;
  color: #8f8f8f;
}

.area-icon {
  width: 20px;
  height: 20px;
  margin: 5px 12px 0 27px;
  color: #616161;
}

/* properties column */
.properties {
  display: flex;
  flex-direction: column;
  min-height: 0;
}

.prop-tabs {
  position: relative;
}

.prop-tabs .dim {
  margin: 0 12px;
}

.prop-tab {
  width: 146px;
  flex: none;
}

.prop-clip {
  width: 89px;
  overflow: hidden;
}

.clip-tab {
  height: 100%;
  justify-content: flex-start;
  white-space: nowrap;
  padding-left: 27px;
}

.prop-next {
  position: absolute;
  right: 12px;
  top: 11px;
}

.prop-body {
  flex: 1;
  min-height: 0;
  overflow: hidden;
  background: #fff;
  padding: 21px 15px 0 15px;
}

.section-title {
  margin: 0;
  font-size: 11.5px;
  font-weight: 400;
  line-height: 16px;
  letter-spacing: 0.8px;
  color: #5c5c5c;
}

.divider {
  border: 0;
  height: 1px;
  background: #eeeeee;
  margin-bottom: 0;
}

.m3 { margin-top: 3px; }
.m4 { margin-top: 4px; }
.m15 { margin-top: 15px; }
.m16 { margin-top: 16px; }
.m17 { margin-top: 17px; }
.m22 { margin-top: 22px; }
.m24 { margin-top: 24px; }

.log-row {
  display: flex;
  align-items: center;
}

.log-row .field {
  flex: 1;
}

.kebab {
  width: 20px;
  height: 20px;
  margin: 0 12px 0 23px;
  color: #616161;
}

.check-row {
  height: 37px;
  margin-top: 12px;
  padding-bottom: 4px;
  box-sizing: border-box;
  display: flex;
  align-items: center;
  gap: 7px;
  padding-left: 6px;
  border-bottom: 1px solid #bdbdbd;
  font-size: 14px;
}

.checkbox {
  width: 16px;
  height: 16px;
  box-sizing: border-box;
  border: 2px solid #757575;
  border-radius: 2px;
}

.info-table {
  margin-top: 7px;
  border: 1px solid #e5e7eb;
  border-radius: 4px;
  background: #f9fafb;
}

.info-row {
  height: 35.6px;
  box-sizing: border-box;
  display: flex;
  align-items: center;
  padding: 0 0 1px 14px;
  font-size: 13px;
  border-bottom: 1px solid #e5e7eb;
}

.info-row:last-child {
  border-bottom: 0;
}

.info-label {
  width: 210px;
}

.info-value {
  letter-spacing: 0.2px;
}

.info-copy {
  margin-left: auto;
  margin-right: 16px;
  width: 20px;
  height: 20px;
  color: #757575;
}
</style>
